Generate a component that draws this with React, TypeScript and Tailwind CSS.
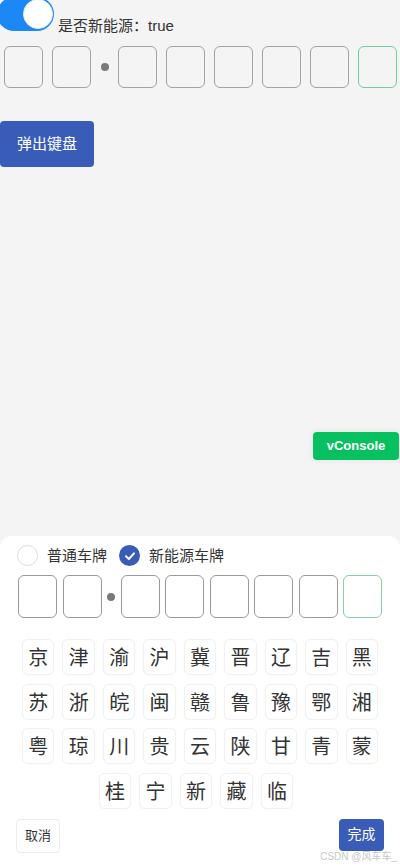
import React from 'react';

const PROVINCES = [
  ['京', '津', '渝', '沪', '冀', '晋', '辽', '吉', '黑'],
  ['苏', '浙', '皖', '闽', '赣', '鲁', '豫', '鄂', '湘'],
  ['粤', '琼', '川', '贵', '云', '陕', '甘', '青', '蒙'],
  ['桂', '宁', '新', '藏', '临'],
];

const FONT = "font-['Liberation_Sans','Noto_Sans_CJK_SC',sans-serif]";

// 车牌输入框：两位 + 圆点 + 六位，最后一位为新能源位
const PlateBoxes = ({ small }: { small?: boolean }) => {
  const box = small
    ? 'w-[39px] h-[43px] rounded-[6px] border border-[#9a9a9a]'
    : 'w-[39px] h-[42px] rounded-[6px] border border-[#a3a3a3]';
  const green = small
    ? 'w-[39px] h-[43px] rounded-[6px] border border-[#7fd3a6]'
    : 'w-[39px] h-[42px] rounded-[6px] border border-[#6fcf9c]';
  const gap = small ? 'gap-[5.5px]' : 'gap-[9px]';

  return (
    <div className={`flex items-center ${gap}`}>
      <div className={box} />
      <div className={box} />
      <div className={small ? 'w-2 flex justify-center' : 'w-[9px] flex justify-center'}>
        <div className="w-[8px] h-[8px] rounded-full bg-[#7a7a7a]" />
      </div>
      {[0, 1, 2, 3, 4].map((i) => (
        <div key={i} className={box} />
      ))}
      <div className={green} />
    </div>
  );
};

const Key = ({ label }: { label: string }) => (
  <div className="w-[32.5px] h-[36px] rounded-[6px] bg-white border border-[#f1f1f1] shadow-[0_0_2px_rgba(0,0,0,0.04)] flex items-center justify-center text-[20px] text-[#333] font-['Noto_Sans_CJK_SC',sans-serif]">
    {label}
  </div>
);

export default function App() {
  return (
    <div className={`relative h-[867px] w-[400px] overflow-hidden bg-[#f4f4f4] flex flex-col ${FONT}`}>
      {/* 开关 */}
      <div className="flex items-start">
        <div className="relative -ml-[3px] -mt-[3px] w-[57px] h-[34px] rounded-full bg-[#1c88f6]">
          <div className="absolute top-[2px] right-[1px] w-[30px] h-[30px] rounded-full bg-white border border-[#e8eef6]" />
        </div>
        <span className="ml-[4px] mt-[16px] leading-[20px] text-[15px] text-[#333]">是否新能源：true</span>
      </div>

      {/* 车牌号 */}
      <div className="mt-[10px] pl-1">
        <PlateBoxes />
      </div>

      <div className="mt-[33px]">
        <button className="w-[94px] h-[46px] rounded-[4px] bg-[#3a5cb9] text-white text-[15px]">
          弹出键盘
        </button>
      </div>

      {/* 键盘面板 */}
      <div className="mt-auto h-[331px] bg-white rounded-t-[12px] flex flex-col">
        <div className="pt-[9px] pl-[17px] h-[30px] flex items-center text-[15px] leading-[21px] text-[#333]">
          <div className="w-[21px] h-[21px] rounded-full border border-[#dcdcdc]" />
          <span className="ml-[9px]">普通车牌</span>
          <div className="ml-[12px] w-[21px] h-[21px] rounded-full bg-[#3a5cb9] flex items-center justify-center">
            <svg width="12" height="12" viewBox="0 0 12 12" fill="none">
              <path d="M2 6.3 L4.9 9 L10 3.4" stroke="white" strokeWidth="2" strokeLinecap="round" strokeLinejoin="round" />
            </svg>
          </div>
          <span className="ml-[9px]">新能源车牌</span>
        </div>

        <div className="mt-[9px] pl-[18px]">
          <PlateBoxes small />
        </div>

        <div className="mt-[21px] ml-[22px] w-[356px] flex flex-col gap-[8.5px]">
          {PROVINCES.map((row, r) => (
            <div key={r} className={`flex justify-center gap-[8px] ${r === 3 ? 'pr-[8px]' : ''}`}>
              {row.map((p) => (
                <Key key={p} label={p} />
              ))}
            </div>
          ))}
        </div>

        <div className="mt-[10px] px-[16px] flex items-start justify-between">
          <button className="w-[44px] h-[34px] rounded-[4px] border border-[#ececec] bg-white text-[13px] text-[#333]">
            取消
          </button>
          <button className="w-[45px] h-[32px] rounded-[4px] bg-[#3a5cb9] text-white text-[14px]">
            完成
          </button>
        </div>
      </div>

      {/* vConsole 悬浮按钮 */}
      <div className="absolute top-[432px] right-[1px] w-[86px] h-[28px] rounded-[4px] bg-[#07c160] flex items-center justify-center text-white text-[13px] font-bold shadow-[0_0_6px_rgba(0,0,0,0.08)]">
        vConsole
      </div>

      {/* 水印 */}
      <div className="absolute right-[3px] bottom-[4px] text-[10px] leading-[12px] text-[#c8c8c8]">
        CSDN @风车车_
      </div>
    </div>
  );
}
